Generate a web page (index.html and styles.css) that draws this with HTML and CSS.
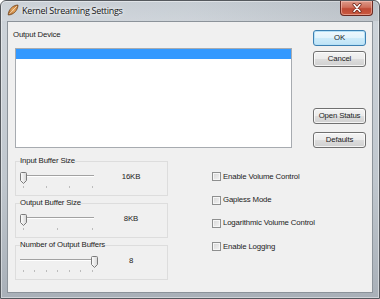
FILE: index.html
```html
<!DOCTYPE html>
<html>
<head>
<meta charset="utf-8">
<link rel="stylesheet" href="styles.css">
</head>
<body>
<div class="window">
  <div class="titlebar">
    <svg class="app-icon" width="12" height="12" viewBox="0 0 12 12">
      <defs>
        <linearGradient id="ig" x1="0" y1="1" x2="1" y2="0">
          <stop offset="0" stop-color="#9c5a22"/>
          <stop offset="0.5" stop-color="#e3a35c"/>
          <stop offset="1" stop-color="#b8702e"/>
        </linearGradient>
      </defs>
      <path d="M1.2 11 C1.2 6 5.5 1 11 1 C11 6.2 6.5 11 1.2 11 Z" fill="url(#ig)" stroke="#6e4118" stroke-width="0.7"/>
      <path d="M2.5 9.8 L9.8 2.2" stroke="#f6e2c4" stroke-width="0.9"/>
    </svg>
    <span class="title">Kernel Streaming Settings</span>
    <div class="close">
      <svg width="12" height="10" viewBox="0 0 12 10">
        <path d="M3 1.5 L9 8.5 M9 1.5 L3 8.5" stroke="#6b2418" stroke-width="3" stroke-linecap="round"/>
        <path d="M3 1.5 L9 8.5 M9 1.5 L3 8.5" stroke="#ffffff" stroke-width="1.6" stroke-linecap="round"/>
      </svg>
    </div>
  </div>
  <div class="client">
    <div class="top-row">
      <div class="device">
        <div class="label">Output Device</div>
        <div class="listbox"><div class="sel"></div></div>
      </div>
      <div class="buttons">
        <button class="btn btn-default">OK</button>
        <button class="btn">Cancel</button>
        <button class="btn btn-push">Open Status</button>
        <button class="btn">Defaults</button>
      </div>
    </div>
    <div class="bottom-row">
      <div class="groups">
        <fieldset class="group">
          <legend>Input Buffer Size</legend>
          <div class="slider-row">
            <svg class="slider" width="78" height="18" viewBox="0 0 78 18">
              <defs>
                <linearGradient id="tg1" x1="0" y1="0" x2="1" y2="0">
                  <stop offset="0" stop-color="#ffffff"/>
                  <stop offset="1" stop-color="#d6d6d6"/>
                </linearGradient>
              </defs>
              <rect x="0" y="4" width="74" height="1" fill="#a2a2a2"/>
              <rect x="0" y="5" width="74" height="1" fill="#ffffff"/>
              <rect x="3" y="15" width="1" height="2" fill="#bcbcbc"/>
              <rect x="26" y="15" width="1" height="2" fill="#bcbcbc"/>
              <rect x="49" y="15" width="1" height="2" fill="#bcbcbc"/>
              <rect x="72" y="15" width="1" height="2" fill="#bcbcbc"/>
              <path d="M0.5 2.5 Q0.5 1.5 1.5 1.5 H5.5 Q6.5 1.5 6.5 2.5 V9.5 L3.5 12.5 L0.5 9.5 Z" fill="url(#tg1)" stroke="#7b7b7b"/>
            </svg>
            <span class="value">16KB</span>
          </div>
        </fieldset>
        <fieldset class="group">
          <legend>Output Buffer Size</legend>
          <div class="slider-row">
            <svg class="slider" width="78" height="18" viewBox="0 0 78 18">
              <defs>
                <linearGradient id="tg2" x1="0" y1="0" x2="1" y2="0">
                  <stop offset="0" stop-color="#ffffff"/>
                  <stop offset="1" stop-color="#d6d6d6"/>
                </linearGradient>
              </defs>
              <rect x="0" y="4" width="74" height="1" fill="#a2a2a2"/>
              <rect x="0" y="5" width="74" height="1" fill="#ffffff"/>
              <rect x="3" y="15" width="1" height="2" fill="#bcbcbc"/>
              <rect x="37" y="15" width="1" height="2" fill="#bcbcbc"/>
              <rect x="72" y="15" width="1" height="2" fill="#bcbcbc"/>
              <path d="M0.5 2.5 Q0.5 1.5 1.5 1.5 H5.5 Q6.5 1.5 6.5 2.5 V9.5 L3.5 12.5 L0.5 9.5 Z" fill="url(#tg2)" stroke="#7b7b7b"/>
            </svg>
            <span class="value">8KB</span>
          </div>
        </fieldset>
        <fieldset class="group">
          <legend>Number of Output Buffers</legend>
          <div class="slider-row">
            <svg class="slider" width="78" height="18" viewBox="0 0 78 18">
              <defs>
                <linearGradient id="tg3" x1="0" y1="0" x2="1" y2="0">
                  <stop offset="0" stop-color="#ffffff"/>
                  <stop offset="1" stop-color="#d6d6d6"/>
                </linearGradient>
              </defs>
              <rect x="0" y="4" width="74" height="1" fill="#a2a2a2"/>
              <rect x="0" y="5" width="74" height="1" fill="#ffffff"/>
              <rect x="3" y="15" width="1" height="2" fill="#bcbcbc"/>
              <rect x="14" y="15" width="1" height="2" fill="#bcbcbc"/>
              <rect x="26" y="15" width="1" height="2" fill="#bcbcbc"/>
              <rect x="37" y="15" width="1" height="2" fill="#bcbcbc"/>
              <rect x="49" y="15" width="1" height="2" fill="#bcbcbc"/>
              <rect x="60" y="15" width="1" height="2" fill="#bcbcbc"/>
              <rect x="72" y="15" width="1" height="2" fill="#bcbcbc"/>
              <path transform="translate(71 0)" d="M0.5 2.5 Q0.5 1.5 1.5 1.5 H5.5 Q6.5 1.5 6.5 2.5 V9.5 L3.5 12.5 L0.5 9.5 Z" fill="url(#tg3)" stroke="#7b7b7b"/>
            </svg>
            <span class="value">8</span>
          </div>
        </fieldset>
      </div>
      <div class="checks">
        <label class="check"><span class="box"></span><span>Enable Volume Control</span></label>
        <label class="check"><span class="box"></span><span>Gapless Mode</span></label>
        <label class="check"><span class="box"></span><span>Logarithmic Volume Control</span></label>
        <label class="check"><span class="box"></span><span>Enable Logging</span></label>
      </div>
    </div>
  </div>
</div>
</body>
</html>
```
FILE: styles.css
```css
* { box-sizing: border-box; }
html, body { margin: 0; padding: 0; }
body {
  width: 380px;
  height: 299px;
  overflow: hidden;
  background: #ffffff;
  font-family: "Liberation Sans", Arial, sans-serif;
  font-size: 7.8px;
  line-height: 10px;
  letter-spacing: -0.15px;
  color: #1c1c1c;
}
.window {
  width: 380px;
  height: 299px;
  display: flex;
  flex-direction: column;
  border: 1px solid #55595e;
  border-radius: 6px 6px 0 0;
  background: linear-gradient(to bottom, #c3cad1 0%, #cdd3d9 8%, #c0c7ce 60%, #a9b0b8 100%);
  box-shadow: inset 0 0 0 1px rgba(255,255,255,0.45);
}
.titlebar {
  height: 20px;
  display: flex;
  align-items: flex-start;
  padding-left: 6px;
  background: linear-gradient(to right, rgba(255,255,255,0.12) 0%, rgba(255,255,255,0.05) 50%, rgba(0,0,0,0.06) 100%);
}
.app-icon {
  margin-top: 3px;
  flex: none;
}
.title {
  margin-left: 3px;
  margin-top: 3px;
  font-family: "Open Sans", "Noto Sans", sans-serif;
  font-size: 9px;
  line-height: 13px;
  letter-spacing: -0.3px;
  color: #151515;
  text-shadow: 0 0 5px #ffffff, 0 0 3px #ffffff;
}
.close {
  margin-left: auto;
  margin-right: 6px;
  width: 33px;
  height: 15px;
  border: 1px solid #6a2a22;
  border-top: none;
  border-radius: 0 0 4px 4px;
  background: linear-gradient(to bottom, #dc9a8a 0%, #cf6f5b 45%, #bf4a35 55%, #c95a40 100%);
  box-shadow: inset 0 0 0 1px rgba(255,210,200,0.5);
  display: flex;
  align-items: center;
  justify-content: center;
}
.client {
  flex: 1;
  margin: 0 6px 5px 6px;
  background: #f0f0f0;
  border: 1px solid #8c939a;
  padding: 8px 6px 0 5px;
  display: flex;
  flex-direction: column;
}
.top-row {
  display: flex;
  height: 118px;
}
.device {
  display: flex;
  flex-direction: column;
}
.label {
  height: 10px;
}
.listbox {
  margin-top: 8px;
  margin-left: 2px;
  width: 277px;
  height: 100px;
  background: #ffffff;
  border: 1px solid #a7abb0;
}
.sel {
  height: 10px;
  background: #3399ff;
}
.buttons {
  margin-left: auto;
  width: 53px;
  display: flex;
  flex-direction: column;
}
.btn {
  width: 53px;
  height: 16px;
  padding: 0;
  margin: 0;
  font-family: inherit;
  font-size: 7.8px;
  letter-spacing: -0.15px;
  line-height: 14px;
  color: #1c1c1c;
  border: 1px solid #707070;
  border-radius: 3px;
  background: linear-gradient(to bottom, #f3f3f3 0%, #ebebeb 50%, #dddddd 51%, #d0d0d0 100%);
  box-shadow: inset 0 0 0 1px rgba(255,255,255,0.75);
}
.btn + .btn { margin-top: 5px; }
.btn-push { margin-top: auto !important; }
.btn-push + .btn { margin-top: 8px; }
.btn-default {
  border-color: #3c7fb1;
  background: linear-gradient(to bottom, #eef8fd 0%, #e2f3fc 50%, #cdebfa 51%, #bfe3f6 100%);
  box-shadow: inset 0 0 0 1px #b6e1f7;
}
.bottom-row {
  display: flex;
  margin-top: 8px;
}
.groups {
  margin-left: 2px;
  width: 153px;
  display: flex;
  flex-direction: column;
}
.group {
  margin: 0 0 2px 0;
  padding: 5px 0 6px 4px;
  border: 1px solid #dddddd;
  min-width: 0;
}
.group legend {
  padding: 0;
  height: 10px;
  line-height: 10px;
}
.slider-row {
  display: flex;
  align-items: flex-start;
  height: 18px;
}
.slider {
  display: block;
  flex: none;
}
.value {
  width: 30px;
  margin-left: 18px;
  margin-top: 1px;
  text-align: center;
}
.checks {
  margin-left: 44px;
  padding-top: 9px;
  display: flex;
  flex-direction: column;
}
.check {
  height: 23.4px;
  display: flex;
  align-items: center;
}
.box {
  width: 9px;
  height: 9px;
  margin-right: 2px;
  border: 1px solid #8e8f8f;
  background: linear-gradient(135deg, #d6d6d6 0%, #f4f4f4 100%);
  box-shadow: inset 0 0 0 1px #f6f6f6;
}
```
